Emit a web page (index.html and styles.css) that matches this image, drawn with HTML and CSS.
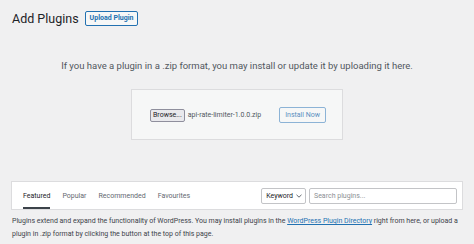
FILE: index.html
```html
<!doctype html>
<html>
<head>
    <meta charset="utf-8" />
    <title>Add Plugins</title>
    <link rel="stylesheet" href="styles.css">
</head>

<body>
    <div class="wrap">
        <div class="page-head">
            <h1>Add Plugins</h1>
            <a class="title-action" href="#">Upload Plugin</a>
        </div>

        <div class="upload-plugin">
            <p class="install-help">If you have a plugin in a .zip format, you may install or update it by uploading it here.</p>
            <form class="upload-form">
                <div class="file-field">
                    <span class="browse">Browse...</span>
                    <span class="file-name">api-rate-limiter-1.0.0.zip</span>
                </div>
                <span class="install-btn">Install Now</span>
            </form>
        </div>

        <div class="filter">
            <ul class="tabs">
                <li class="current">Featured</li>
                <li>Popular</li>
                <li>Recommended</li>
                <li>Favourites</li>
            </ul>
            <div class="search">
                <span class="keyword">Keyword
                    <svg width="6" height="4" viewBox="0 0 6 4"><path d="M0.5 0.8 L3 3.2 L5.5 0.8" fill="none" stroke="#50575e" stroke-width="0.9"/></svg>
                </span>
                <span class="search-input">Search plugins...</span>
            </div>
        </div>

        <p class="note">Plugins extend and expand the functionality of WordPress. You may install plugins in the <a href="#">WordPress Plugin Directory</a> right from here, or upload a plugin in .zip format by clicking the button at the top of this page.</p>
    </div>
</body>

</html>
```

FILE: styles.css
```css
:root {
    --bg: #f0f0f1;
    --text: #1d2327;
    --muted: #50575e;
    --blue: #2271b1;
    --line: #dcdcde;
}
html, body {
    background-color: var(--bg);
}
body {
    margin: 0;
    color: var(--text);
    font-family: Roboto, 'Liberation Sans', sans-serif;
}

.wrap {
    padding: 8px 11px 0 11px;
}

.page-head {
    display: flex;
    align-items: center;
    gap: 6px;
}
    h1 {
        margin: 0 0 0 1px;
        font-size: 12.5px;
        font-weight: 400;
        line-height: 21px;
    }
    .title-action {
        padding: 2px 4px;
        border: 1px solid var(--blue);
        border-radius: 2px;
        background-color: #f6f7f7;
        color: var(--blue);
        font-size: 7px;
        font-weight: 700;
        line-height: 9px;
        text-decoration: none;
    }

.upload-plugin {
    display: flex;
    flex-direction: column;
    align-items: center;
}
    .install-help {
        margin: 30px 0 0;
        color: var(--muted);
        font-size: 9.5px;
        line-height: 14px;
    }
    .upload-form {
        margin-top: 16px;
        width: 176px;
        padding: 17px 16px 16px 18px;
        display: flex;
        align-items: center;
        justify-content: space-between;
        background-color: #f6f7f7;
        border: 1px solid var(--line);
    }
        .file-field {
            display: flex;
            align-items: center;
            gap: 3px;
            font-size: 7px;
            color: var(--muted);
        }
        .browse {
            padding: 1px 2px;
            background-color: #e9e9ed;
            border: 1px solid #8f8f9d;
            border-radius: 2px;
            color: var(--text);
            line-height: 9px;
        }
        .install-btn {
            padding: 3px 5px;
            border: 1px solid #8cb3d6;
            border-radius: 2px;
            background-color: #f6f7f7;
            color: #5b8fc0;
            font-size: 7px;
            line-height: 8px;
        }

.filter {
    margin-top: 41px;
    height: 27px;
    padding: 0 5px 0 11px;
    display: flex;
    align-items: center;
    justify-content: space-between;
    background-color: #fff;
    border: 1px solid var(--line);
}
    .tabs {
        margin: 0;
        padding: 0;
        list-style: none;
        display: flex;
        align-self: stretch;
        gap: 12px;
    }
        .tabs li {
            display: flex;
            align-items: center;
            font-size: 7px;
            color: #646970;
            border-bottom: 2px solid transparent;
            padding-top: 2px;
        }
        .tabs li.current {
            color: var(--text);
            border-bottom-color: #3c434a;
        }
    .search {
        display: flex;
        gap: 3px;
        font-size: 7px;
        color: var(--muted);
    }
        .keyword, .search-input {
            height: 14px;
            display: flex;
            align-items: center;
            border: 1px solid #c3c4c7;
            border-radius: 2px;
            background-color: #fff;
        }
        .keyword {
            padding: 0 3px 0 4px;
            gap: 3px;
            color: var(--text);
        }
        .search-input {
            width: 142px;
            padding-left: 4px;
            color: #8c8f94;
        }

.note {
    margin: 5px 1px;
    font-size: 7px;
    line-height: 13px;
    color: #3c434a;
}
    .note a {
        color: var(--blue);
    }
```
